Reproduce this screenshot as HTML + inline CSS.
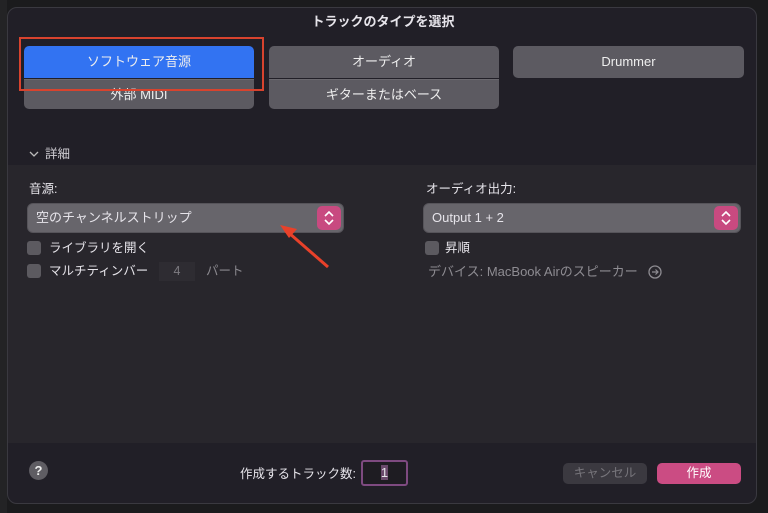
<!DOCTYPE html>
<html><head><meta charset="utf-8"><style>
*{margin:0;padding:0;box-sizing:border-box}
body{width:768px;height:513px;background:#1b1b1d;position:relative;overflow:hidden;font-family:"Liberation Sans","Noto Sans CJK JP",sans-serif;color:#e6e4ea;font-size:12.5px;line-height:1.2}
.a{position:absolute}
.dlg{left:7px;top:7px;width:750px;height:497px;background:#211f27;border:1px solid #3a3940;border-radius:10px;overflow:hidden}
.det{left:0;top:157px;width:750px;height:278px;background:#28262c}
.btn{position:absolute;background:#5c5a61;color:#eee;font-size:13px;text-align:center}
.chk{position:absolute;width:14px;height:14px;background:#5c5a60;border-radius:3px}
.pop{position:absolute;height:30px;background:#67656b;border-radius:6px;border:1px solid #56545a;line-height:27px;padding-left:8px;font-size:13px}
.step{position:absolute;right:2px;top:2px;width:24px;height:24px;background:#c84a80;border-radius:5px}
</style></head><body>
<div class="a" style="left:0;top:0;width:7px;height:513px;background:#232325"></div>
<div class="a dlg">
 <div class="a" style="left:0;top:6px;width:750px;text-align:center;font-weight:bold;font-size:13px">トラックのタイプを選択</div>
 <div class="btn" style="left:16px;top:38px;width:230px;height:32px;background:#3273f2;border-radius:5px 5px 0 0;line-height:32px">ソフトウェア音源</div>
 <div class="btn" style="left:16px;top:71px;width:230px;height:30px;border-radius:0 0 5px 5px;line-height:30px;border-top:1px solid #6a686e">外部 MIDI</div>
 <div class="btn" style="left:261px;top:38px;width:230px;height:32px;border-radius:5px 5px 0 0;line-height:32px">オーディオ</div>
 <div class="btn" style="left:261px;top:71px;width:230px;height:30px;border-radius:0 0 5px 5px;line-height:30px;border-top:1px solid #6a686e">ギターまたはベース</div>
 <div class="btn" style="left:505px;top:38px;width:231px;height:32px;border-radius:5px;line-height:32px">Drummer</div>
 <div class="a" style="left:11px;top:29px;width:245px;height:54px;border:2px solid #d8432e"></div>
 <svg class="a" style="left:21px;top:142px" width="10" height="8"><path d="M1 2l4 4 4-4" stroke="#bbb" stroke-width="1.3" fill="none"/></svg>
 <div class="a" style="left:37px;top:139px;color:#cfcdd3">詳細</div>
 <div class="a det">
  <div class="a" style="left:21px;top:17px">音源:</div>
  <div class="pop" style="left:19px;top:38px;width:317px">空のチャンネルストリップ<div class="step"><svg width="24" height="24"><path d="M8 10l4-4 4 4M8 14l4 4 4-4" stroke="#fff" stroke-width="1.6" fill="none"/></svg></div></div>
  <div class="chk" style="left:19px;top:76px"></div><div class="a" style="left:41px;top:76px">ライブラリを開く</div>
  <div class="chk" style="left:19px;top:99px"></div><div class="a" style="left:41px;top:99px">マルチティンバー</div>
  <div class="a" style="left:151px;top:97px;width:36px;height:19px;background:#2e2c32;color:#7d7b81;text-align:center;line-height:19px">4</div>
  <div class="a" style="left:198px;top:99px;color:#8a888e">パート</div>
  <div class="a" style="left:418px;top:17px">オーディオ出力:</div>
  <div class="pop" style="left:415px;top:38px;width:318px">Output 1 + 2<div class="step"><svg width="24" height="24"><path d="M8 10l4-4 4 4M8 14l4 4 4-4" stroke="#fff" stroke-width="1.6" fill="none"/></svg></div></div>
  <div class="chk" style="left:417px;top:76px"></div><div class="a" style="left:437px;top:76px">昇順</div>
  <div class="a" style="left:420px;top:99px;color:#8e8c92;font-size:13px">デバイス: MacBook Airのスピーカー</div>
  <svg class="a" style="left:640px;top:100px" width="14" height="14"><circle cx="7" cy="7" r="6" stroke="#8e8c92" stroke-width="1.3" fill="none"/><path d="M4 7h6M7.5 4.5L10 7l-2.5 2.5" stroke="#8e8c92" stroke-width="1.2" fill="none"/></svg>
 </div>
 <div class="a" style="left:21px;top:453px;width:19px;height:19px;border-radius:50%;background:#5f5d63;color:#eee;text-align:center;font-weight:bold;font-size:13px;line-height:19px">?</div>
 <div class="a" style="left:232px;top:459px">作成するトラック数:</div>
 <div class="a" style="left:353px;top:452px;width:47px;height:26px;border:2px solid #7e4a80;border-radius:3px;background:#1e1c22;text-align:center;line-height:22px;font-size:13px"><span style="background:#6a4a6c">1</span></div>
 <div class="a" style="left:555px;top:455px;width:84px;height:21px;background:#3b3940;border-radius:5px;color:#77757b;text-align:center;line-height:21px">キャンセル</div>
 <div class="a" style="left:649px;top:455px;width:84px;height:21px;background:#cb4c83;border-radius:5px;color:#fff;text-align:center;line-height:21px">作成</div>
</div>
<svg class="a" style="left:0;top:0" width="768" height="513"><path d="M328 267L289 233" stroke="#e8412a" stroke-width="3"/><path d="M280 225l17 4-8 9z" fill="#e8412a"/></svg>
</body></html>
